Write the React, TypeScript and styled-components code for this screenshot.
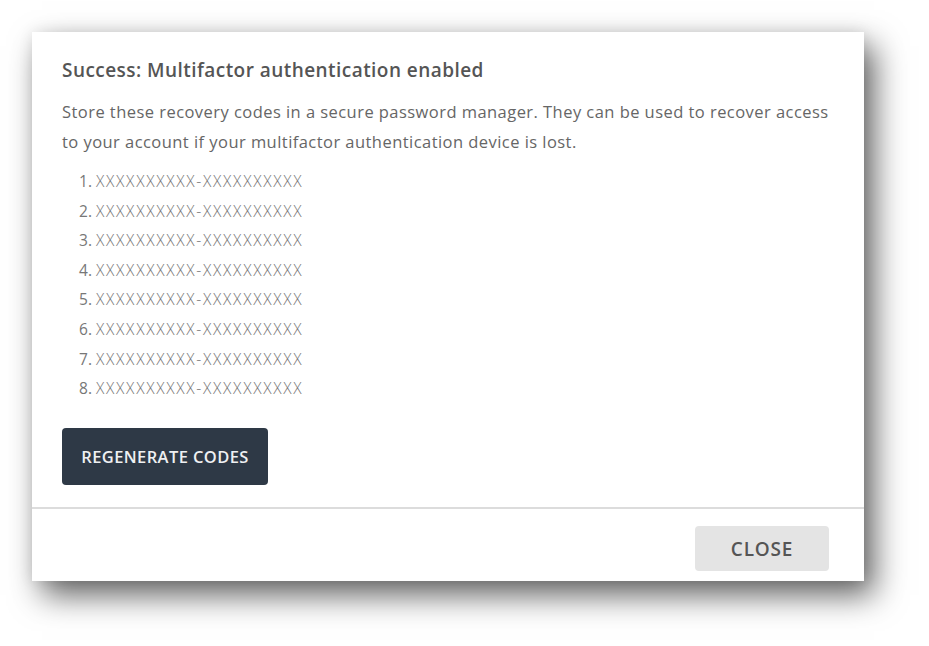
import React from "react";
import styled, { createGlobalStyle } from "styled-components";

const codes = Array.from({ length: 8 }, () => "XXXXXXXXXX-XXXXXXXXXX");

const App: React.FC = () => {
  return (
    <Page>
      <GlobalStyle />
      <Dialog>
        <Body>
          <Title>Success: Multifactor authentication enabled</Title>
          <Text>
            Store these recovery codes in a secure password manager. They can be used to recover access
            to your account if your multifactor authentication device is lost.
          </Text>
          <CodeList>
            {codes.map((code, i) => (
              <Code key={i}>{code}</Code>
            ))}
          </CodeList>
          <PrimaryButton>Regenerate codes</PrimaryButton>
        </Body>
        <Footer>
          <SecondaryButton>Close</SecondaryButton>
        </Footer>
      </Dialog>
    </Page>
  );
};

export default App;

// Styles
const GlobalStyle = createGlobalStyle`
  html, body { margin: 0; padding: 0; background: #ffffff; }
  body { font-family: "Open Sans", Lato, sans-serif; }
`;

const Page = styled.div`
  padding: 32px 0 0 32px;
  width: 929px;
  height: 646px;
  box-sizing: border-box;
`;

const Dialog = styled.div`
  width: 832px;
  height: 549px;
  background: #fff;
  display: flex;
  flex-direction: column;
  box-shadow: 10px 14px 30px rgba(0, 0, 0, 0.62), 0 0 14px rgba(0, 0, 0, 0.08);
`;

const Body = styled.div`
  flex: 1;
  padding: 26px 30px 0;
  display: flex;
  flex-direction: column;
  align-items: flex-start;
  border-bottom: 2px solid #dcdcdc;
`;

const Title = styled.h2`
  margin: 0;
  font-size: 19px;
  line-height: 24px;
  font-weight: 600;
  letter-spacing: 0.45px;
  color: #555;
`;

const Text = styled.p`
  margin: 15px 0 0;
  font-size: 16.5px;
  line-height: 30px;
  letter-spacing: 0.45px;
  color: #666;
  max-width: 790px;
`;

const CodeList = styled.ol`
  margin: 10px 0 0;
  padding-left: 34px;
  font-size: 15.5px;
  line-height: 29.6px;
  color: #777;
  font-weight: 300;
  letter-spacing: 1.7px;
`;

const Code = styled.li`
  &::marker { font-weight: 400; letter-spacing: 0; }
`;

const PrimaryButton = styled.button`
  margin-top: 24px;
  width: 206px;
  height: 57px;
  border: none;
  border-radius: 4px;
  background: #2e3946;
  color: #eef0f2;
  font-family: inherit;
  font-size: 16.5px;
  font-weight: 600;
  letter-spacing: 0.4px;
  text-transform: uppercase;
  cursor: pointer;
`;

const Footer = styled.div`
  display: flex;
  justify-content: flex-end;
  padding: 17px 35px 10px;
`;

const SecondaryButton = styled.button`
  width: 134px;
  height: 45px;
  border: none;
  border-radius: 4px;
  background: #e4e4e4;
  color: #555;
  font-family: inherit;
  font-size: 19px;
  font-weight: 600;
  letter-spacing: 0.8px;
  text-transform: uppercase;
  cursor: pointer;
`;
